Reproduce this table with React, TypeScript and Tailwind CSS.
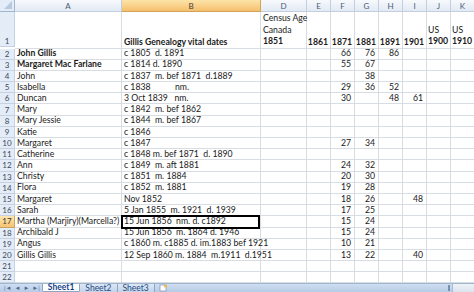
import React from "react";

type Row = {
  n: number;
  a?: string;
  b?: string;
  bold?: boolean;
  f?: string;
  g?: string;
  h?: string;
  i?: string;
};

const rows: Row[] = [
  { n: 2, a: "John Gillis", b: "c 1805  d. 1891", bold: true, f: "66", g: "76", h: "86" },
  { n: 3, a: "Margaret Mac Farlane", b: "c 1814 d. 1890", bold: true, f: "55", g: "67" },
  { n: 4, a: "John", b: "c 1837  m. bef 1871  d.1889", g: "38" },
  { n: 5, a: "Isabella", b: "c 1838           nm.", f: "29", g: "36", h: "52" },
  { n: 6, a: "Duncan", b: "3 Oct 1839   nm.", f: "30", h: "48", i: "61" },
  { n: 7, a: "Mary", b: "c 1842  m. bef 1862" },
  { n: 8, a: "Mary Jessie", b: "c 1844  m. bef 1867" },
  { n: 9, a: "Katie", b: "c 1846" },
  { n: 10, a: "Margaret", b: "c 1847", f: "27", g: "34" },
  { n: 11, a: "Catherine", b: "c 1848 m. bef 1871  d. 1890" },
  { n: 12, a: "Ann", b: "c 1849  m. aft 1881", f: "24", g: "32" },
  { n: 13, a: "Christy", b: "c 1851  m. 1884", f: "20", g: "30" },
  { n: 14, a: "Flora", b: "c 1852  m. 1881", f: "19", g: "28" },
  { n: 15, a: "Margaret", b: "Nov 1852", f: "18", g: "26", i: "48" },
  { n: 16, a: "Sarah", b: "5 Jan 1855  m. 1921  d. 1939", f: "17", g: "25" },
  { n: 17, a: "Martha (Marjiry)(Marcella?)", b: "15 Jun 1856  nm. d. c1892", f: "15", g: "24" },
  { n: 18, a: "Archibald J", b: "15 Jun 1856  m. 1864 d. 1946", f: "15", g: "24" },
  { n: 19, a: "Angus", b: "c 1860 m. c1885 d. im.1883 bef 1921", f: "10", g: "21" },
  { n: 20, a: "Gillis Gillis", b: "12 Sep 1860 m. 1884  m.1911  d.1951", f: "13", g: "22", i: "40" },
  { n: 21 },
  { n: 22 },
];

const grid =
  "grid grid-cols-[15px_107px_139px_46px_24px_24px_24px_24px_24px_24px_24px]";

const cellBase = "border-r border-b border-[#d8dde4] overflow-visible whitespace-pre";

function RowHeader({ n }: { n: number }) {
  const sel = n === 17;
  return (
    <div
      className={`h-[11.2px] flex items-center justify-center border-r border-b text-[8px] leading-none ${
        sel
          ? "bg-gradient-to-b from-[#fde7b0] to-[#f6c36f] border-[#c9a468] text-[#3a3a3a]"
          : "bg-[#e4ecf7] border-[#c5d2e3] text-[#3b4a5e]"
      }`}
    >
      {n}
    </div>
  );
}

function Num({ v }: { v?: string }) {
  return (
    <div className={`${cellBase} h-[11.2px] flex items-center justify-end pr-[3px] leading-none`}>
      {v}
    </div>
  );
}

export default function App() {
  const headers = ["A", "B", "D", "E", "F", "G", "H", "I", "J", "K"];
  return (
    <div className="w-[474px] h-[292px] overflow-hidden bg-white font-['Lato',sans-serif] text-[8.7px] text-[#1a1a1a] flex flex-col">
      <div className="overflow-hidden">
        <div className={`${grid} w-[475px]`}>
          {/* header row */}
          <div className="h-[12px] bg-[#e4ecf7] border-r border-b border-[#9eb6ce] relative">
            <div className="absolute right-[2px] bottom-[2px] w-0 h-0 border-l-[8px] border-l-transparent border-b-[8px] border-b-[#b7c9de]" />
          </div>
          {headers.map((h) => (
            <div
              key={h}
              className={`h-[12px] flex items-center justify-center text-[8px] leading-none border-r border-b ${
                h === "B"
                  ? "bg-gradient-to-b from-[#fde4a8] to-[#f5bf6c] border-[#d2a45c] text-[#3d3d3d]"
                  : "bg-gradient-to-b from-[#f7f9fc] to-[#e2eaf4] border-[#c3cfde] text-[#4a5d78]"
              }`}
            >
              {h}
            </div>
          ))}

          {/* row 1 */}
          <div className="h-[34.5px] bg-[#e4ecf7] border-r border-b border-[#c5d2e3] flex items-end justify-center pb-[1px] text-[8px] leading-none text-[#3b4a5e]">
            1
          </div>
          <div className={`${cellBase}`} />
          <div className={`${cellBase} flex items-end pl-[2px] pb-[1px] font-bold leading-none`}>
            Gillis Genealogy vital dates
          </div>
          <div className={`${cellBase} flex flex-col justify-end pl-[2px] pb-[1px] leading-[11.5px]`}>
            <span>Census Age</span>
            <span>Canada</span>
            <span className="font-bold">1851</span>
          </div>
          {["1861", "1871", "1881", "1891", "1901"].map((y) => (
            <div key={y} className={`${cellBase} flex items-end justify-end pr-[2px] pb-[1px] font-bold leading-none`}>
              {y}
            </div>
          ))}
          {["1900", "1910"].map((y) => (
            <div key={y} className={`${cellBase} flex flex-col justify-end pl-[1px] pb-[1px] leading-[11.5px]`}>
              <span>US</span>
              <span className="font-bold">{y}</span>
            </div>
          ))}

          {rows.map((r) => (
            <React.Fragment key={r.n}>
              <RowHeader n={r.n} />
              <div className={`${cellBase} h-[11.2px] flex items-center pl-[2px] leading-none ${r.bold ? "font-bold" : ""}`}>
                {r.a}
              </div>
              <div className={`${cellBase} h-[11.2px] flex items-center pl-[2px] leading-none relative`}>
                {r.b}
                {r.n === 17 && (
                  <div className="absolute -left-[1px] -top-[1px] right-0 -bottom-[2px] border-2 border-black z-10 pointer-events-none" />
                )}
              </div>
              <div className={`${cellBase} h-[11.2px]`} />
              <Num />
              <Num v={r.f} />
              <Num v={r.g} />
              <Num v={r.h} />
              <Num v={r.i} />
              <Num />
              <Num />
            </React.Fragment>
          ))}
        </div>
      </div>

      {/* tab bar */}
      <div className="flex-1 flex items-stretch bg-gradient-to-b from-[#cfdef1] to-[#b6cbe6] border-t border-[#9eb6ce] text-[8.5px] leading-none">
        <div className="flex items-center gap-[3px] pl-[4px] pr-[2px] text-[#4f6a8f] text-[6px]">
          <span>|◄</span>
          <span>◄</span>
          <span>►</span>
          <span>►|</span>
        </div>
        <div className="flex items-end">
          <div className="h-full px-[5px] bg-white flex items-center font-bold text-[#15428b] border-x border-b border-[#8ca6c6] -mt-[1px] rounded-b-[2px]">
            Sheet1
          </div>
          <div className="h-full px-[5px] flex items-center text-[#2a4d85] border-r border-[#8ca6c6] bg-gradient-to-b from-[#dde8f5] to-[#c2d4eb]">
            Sheet2
          </div>
          <div className="h-full px-[5px] flex items-center text-[#2a4d85] border-r border-[#8ca6c6] bg-gradient-to-b from-[#dde8f5] to-[#c2d4eb]">
            Sheet3
          </div>
          <div className="h-full px-[4px] flex items-center">
            <svg width="9" height="8" viewBox="0 0 9 8">
              <rect x="1" y="1" width="6" height="6" fill="#fff" stroke="#8a9fba" strokeWidth="0.8" />
              <circle cx="6.5" cy="2" r="1.6" fill="#f2b84b" />
            </svg>
          </div>
        </div>
        <div className="flex-1" />
        <div className="w-[6px] flex items-center justify-center">
          <div className="w-[2px] h-[6px] bg-[#7a90ad]" />
        </div>
        <div className="w-[22px] bg-gradient-to-b from-[#eef2f7] to-[#dbe3ee] border-l border-[#a9bcd4]" />
      </div>
    </div>
  );
}
